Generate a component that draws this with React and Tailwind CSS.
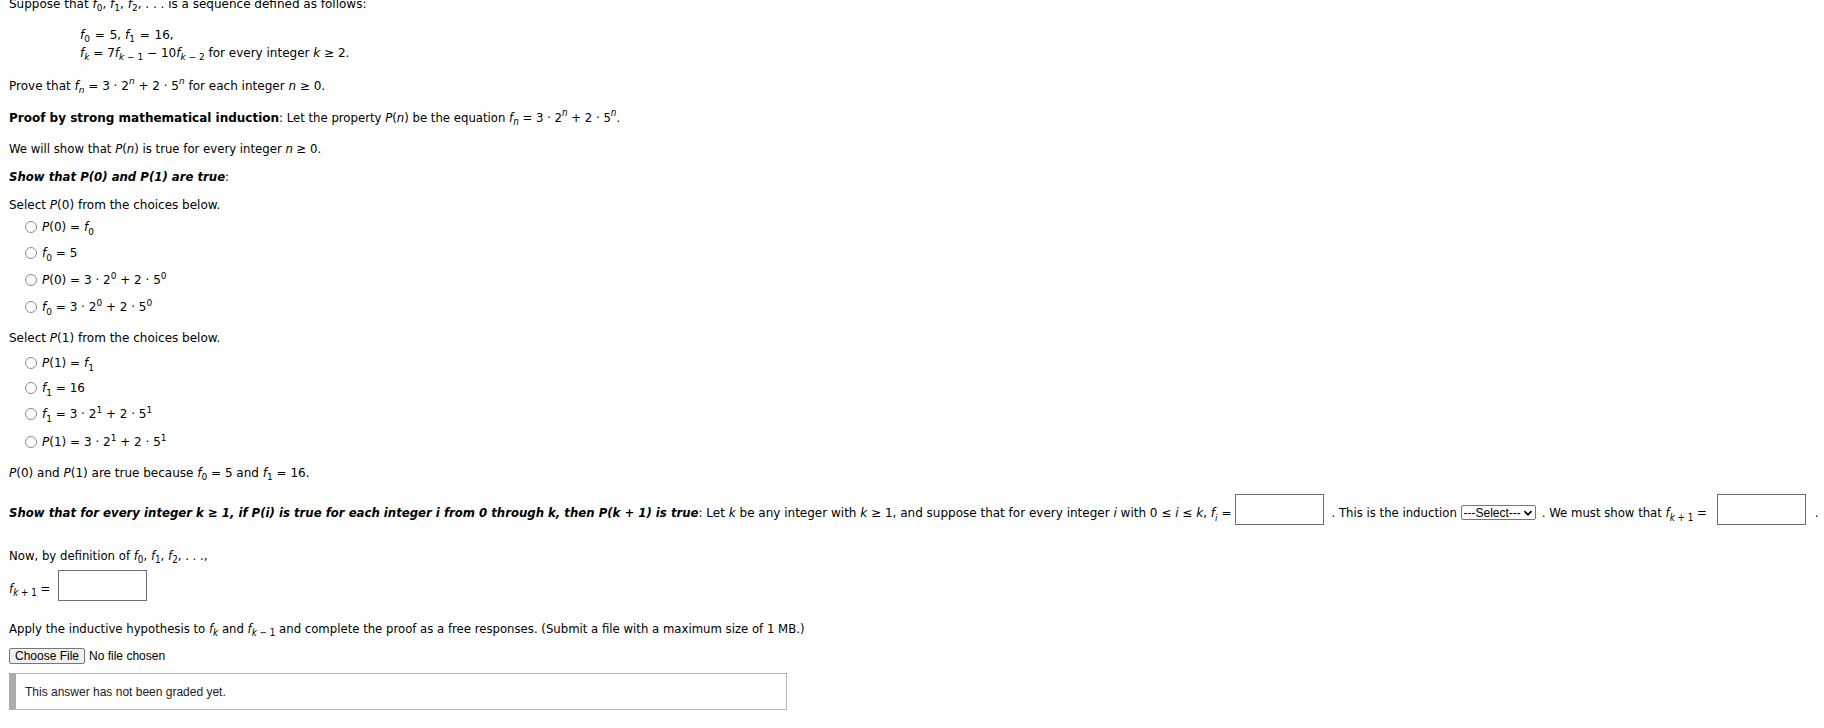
import React from 'react';

const verdana = "font-['DejaVu_Sans',Verdana,sans-serif] text-[12px]";
const tahoma = "font-['DejaVu_Sans_Condensed','DejaVu_Sans',Tahoma,sans-serif] [font-stretch:condensed] text-[13px]";

const Sub = ({ children }) => <sub className="text-[0.75em] bottom-[-0.45em]">{children}</sub>;
const Sup = ({ children }) => <sup className="text-[0.75em] top-[-0.55em]">{children}</sup>;
const F = ({ s }) => (
  <>
    <i>f</i>
    <Sub>{s}</Sub>
  </>
);
const P = ({ n }) => (
  <>
    <i>P</i>({n})
  </>
);
const Eq = () => <span className="px-[1px]"> = </span>;

const Row = ({ className = '', children }) => (
  <div className={`flex items-center h-5 whitespace-pre ${className}`}>{children}</div>
);

const Radio = ({ children, className = '' }) => (
  <Row className={`pl-[16px] ${className}`}>
    <span className="w-[12px] h-[12px] rounded-full border border-[#8a8a8a] bg-white mr-[5px]" />
    <span>{children}</span>
  </Row>
);

const Box = () => <span className="inline-block w-[89px] h-[31px] border border-[#6e6e6e] bg-white" />;

export default function App() {
  const options0 = [
    <>
      <P n="0" /> = <F s="0" />
    </>,
    <>
      <F s="0" /> = 5
    </>,
    <>
      <P n="0" /> = 3 · 2<Sup>0</Sup> + 2 · 5<Sup>0</Sup>
    </>,
    <>
      <F s="0" /> = 3 · 2<Sup>0</Sup> + 2 · 5<Sup>0</Sup>
    </>,
  ];
  const options1 = [
    <>
      <P n="1" /> = <F s="1" />
    </>,
    <>
      <F s="1" /> = 16
    </>,
    <>
      <F s="1" /> = 3 · 2<Sup>1</Sup> + 2 · 5<Sup>1</Sup>
    </>,
    <>
      <P n="1" /> = 3 · 2<Sup>1</Sup> + 2 · 5<Sup>1</Sup>
    </>,
  ];
  const gaps0 = ['mt-[2px]', 'mt-[6px]', 'mt-[7px]', 'mt-[7px]'];
  const gaps1 = ['mt-[5px]', 'mt-[5px]', 'mt-[6px]', 'mt-[8px]'];

  return (
    <div className="w-[1824px] h-[728px] overflow-hidden bg-white text-black">
      <div className="px-[9px] mt-[-6px]">
        <Row className={verdana}>
          Suppose that <F s="0" />, <F s="1" />, <F s="2" />, . . . is a sequence defined as follows:
        </Row>

        <div className={`${verdana} pl-[71px] mt-[12px]`}>
          <div className="h-[18px] flex items-center whitespace-pre">
            <F s="0" />
            <Eq />
            5, <F s="1" />
            <Eq />
            16,
          </div>
          <div className="h-[18px] flex items-center whitespace-pre">
            <F s={<i>k</i>} /> = 7<F s={<><i>k</i> − 1</>} /> − 10<F s={<><i>k</i> − 2</>} /> for every integer <i>k</i> ≥ 2.
          </div>
        </div>

        <Row className={`${verdana} mt-[14px]`}>
          Prove that <F s={<i>n</i>} /> = 3 · 2<Sup><i>n</i></Sup> + 2 · 5<Sup><i>n</i></Sup> for each integer <i>n</i> ≥ 0.
        </Row>

        <Row className={`${tahoma} mt-[12px]`}>
          <b className="font-['DejaVu_Sans',Verdana,sans-serif] [font-stretch:normal] text-[12px]">
            Proof by strong mathematical induction
          </b>
          : Let the property <P n={<i>n</i>} /> be the equation <F s={<i>n</i>} /> = 3 · 2<Sup><i>n</i></Sup> + 2 ·
          5<Sup><i>n</i></Sup>.
        </Row>

        <Row className={`${tahoma} mt-[11px]`}>
          We will show that <P n={<i>n</i>} /> is true for every integer <i>n</i> ≥ 0.
        </Row>

        <Row className={`${tahoma} mt-[8px]`}>
          <b>
            <i>
              Show that <P n="0" /> and <P n="1" /> are true
            </i>
          </b>
          :
        </Row>

        <Row className={`${verdana} mt-[8px]`}>
          Select <P n="0" /> from the choices below.
        </Row>
        <div className={verdana}>
          {options0.map((o, i) => (
            <Radio key={i} className={gaps0[i]}>
              {o}
            </Radio>
          ))}
        </div>

        <Row className={`${verdana} mt-[11px]`}>
          Select <P n="1" /> from the choices below.
        </Row>
        <div className={verdana}>
          {options1.map((o, i) => (
            <Radio key={i} className={gaps1[i]}>
              {o}
            </Radio>
          ))}
        </div>

        <Row className={`${verdana} mt-[11px]`}>
          <P n="0" /> and <P n="1" /> are true because <F s="0" /> = 5 and <F s="1" /> = 16.
        </Row>

        {/* inductive step */}
        <div className="flex items-center h-[31px] mt-[14px] whitespace-pre">
          <span className={tahoma}>
            <b>
              <i>
                Show that for every integer k ≥ 1, if <P n="i" /> is true for each integer i from 0 through k, then{' '}
                <P n="k + 1" /> is true
              </i>
            </b>
          </span>
          <span className={verdana}>
            : Let <i>k</i> be any integer with <i>k</i> ≥ 1, and suppose that for every integer <i>i</i> with 0 ≤ <i>i</i> ≤{' '}
            <i>k</i>, <F s={<i>i</i>} /> =
          </span>
          <span className="ml-[4px]">
            <Box />
          </span>
          <span className={`${tahoma} ml-[7px]`}>. This is the induction </span>
          <span className="inline-flex items-center h-[15px] border border-[#767676] rounded-[2px] px-[2px] font-['Liberation_Sans',Arial,sans-serif] text-[12px] text-black">
            ---Select---
            <svg viewBox="0 0 10 10" className="w-[10px] h-[10px] ml-[2px]" fill="none" stroke="#000" strokeWidth="1.8">
              <path d="M1.5 3.2 5 6.8 8.5 3.2" />
            </svg>
          </span>
          <span className={`${tahoma} ml-[6px]`}>
            . We must show that <F s={<><i>k</i> + 1</>} /> =
          </span>
          <span className="ml-[10px]">
            <Box />
          </span>
          <span className={`${verdana} ml-[9px]`}>.</span>
        </div>

        <Row className={`${tahoma} mt-[18px]`}>
          Now, by definition of <F s="0" />, <F s="1" />, <F s="2" />, . . .,
        </Row>

        <div className={`${tahoma} flex items-center h-[31px] mt-[7px] whitespace-pre`}>
          <F s={<><i>k</i> + 1</>} /> =
          <span className="ml-[8px]">
            <Box />
          </span>
        </div>

        <Row className={`${tahoma} mt-[15px]`}>
          Apply the inductive hypothesis to <F s={<i>k</i>} /> and <F s={<><i>k</i> − 1</>} /> and complete the proof as a free
          responses. (Submit a file with a maximum size of 1 MB.)
        </Row>

        <div className="flex items-center h-4 mt-[9px] font-['Liberation_Sans',Arial,sans-serif] text-[12px]">
          <span className="h-4 flex items-center px-[5px] bg-[#efefef] border border-[#767676] rounded-[2px] text-black">
            Choose File
          </span>
          <span className="ml-[4px] text-black">No file chosen</span>
        </div>

        <div className="mt-[9px] w-[778px] h-[37px] flex items-center border border-[#b5b5b5] border-l-[7px] border-l-[#ababab] pl-[9px] font-['Liberation_Sans',Arial,sans-serif] text-[12px] text-[#222]">
          This answer has not been graded yet.
        </div>
      </div>
    </div>
  );
}
